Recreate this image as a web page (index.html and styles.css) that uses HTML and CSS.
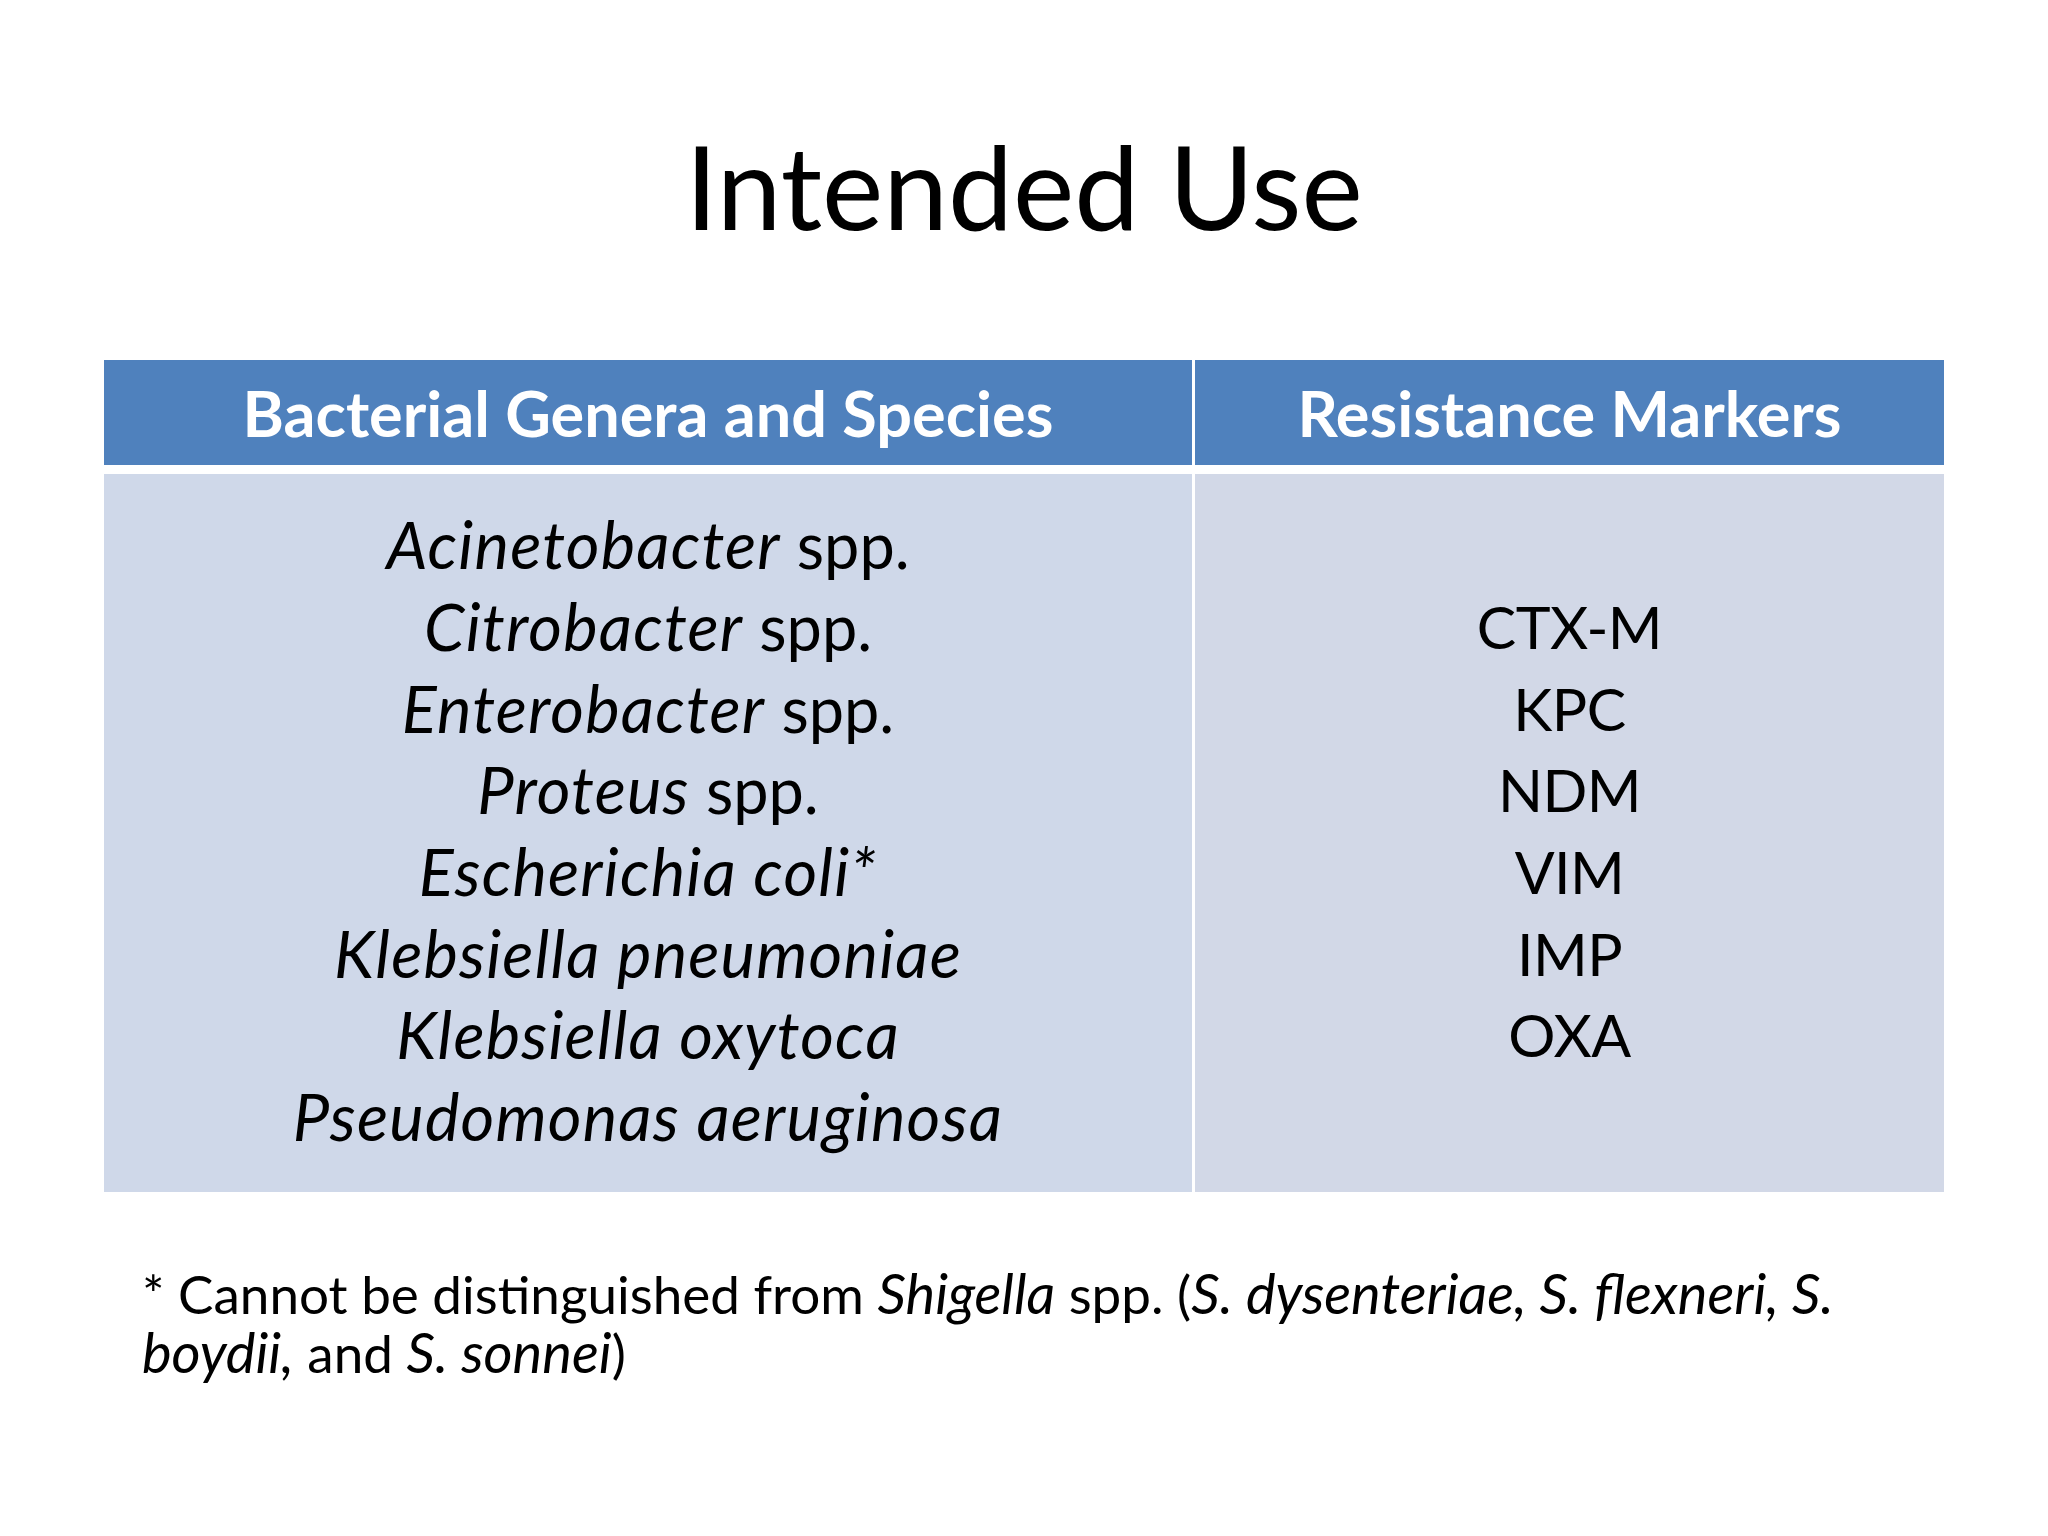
FILE: index.html
```html
<!DOCTYPE html>
<html lang="en">
<head>
<meta charset="utf-8">
<title>Intended Use</title>
<link rel="stylesheet" href="styles.css">
</head>
<body>
<div class="slide">
  <h1 class="title">Intended Use</h1>
  <div class="table">
    <div class="th">Bacterial Genera and Species</div>
    <div class="th">Resistance Markers</div>
    <div class="td td-left">
      <div><i>Acinetobacter</i> spp.</div>
      <div><i>Citrobacter</i> spp.</div>
      <div><i>Enterobacter</i> spp.</div>
      <div><i>Proteus</i> spp.</div>
      <div><i>Escherichia coli*</i></div>
      <div><i>Klebsiella pneumoniae</i></div>
      <div><i>Klebsiella oxytoca</i></div>
      <div><i>Pseudomonas aeruginosa</i></div>
    </div>
    <div class="td td-right">
      <div>CTX-M</div>
      <div>KPC</div>
      <div>NDM</div>
      <div>VIM</div>
      <div>IMP</div>
      <div>OXA</div>
    </div>
  </div>
  <p class="note">* Cannot be distinguished from <i>Shigella</i> spp. (<i>S. dysenteriae, S. flexneri, S.</i><br><i>boydii,</i> and <i>S. sonnei</i>)</p>
</div>
</body>
</html>
```

FILE: styles.css
```css
html, body {
  margin: 0;
  padding: 0;
  background: #ffffff;
}

.slide {
  width: 2048px;
  height: 1536px;
  box-sizing: border-box;
  padding-top: 116px;
  font-family: Lato, "Open Sans", sans-serif;
  color: #000000;
  display: flex;
  flex-direction: column;
  align-items: flex-start;
}

.title {
  align-self: center;
  margin: 0;
  font-size: 116px;
  line-height: 139px;
  font-weight: 400;
  text-align: center;
}

.table {
  margin: 105px 0 0 104px;
  display: grid;
  grid-template-columns: 1088px 749px;
  grid-template-rows: 105px 718px;
  column-gap: 3px;
  row-gap: 9px;
}

.th {
  background: #4f81bd;
  color: #ffffff;
  font-weight: 700;
  font-size: 63px;
  line-height: 105px;
  text-align: center;
  white-space: nowrap;
}

.td {
  display: flex;
  flex-direction: column;
  justify-content: center;
  align-items: center;
  font-size: 63px;
  line-height: 81.7px;
  padding-bottom: 4px;
  box-sizing: border-box;
  white-space: nowrap;
}

.td i {
  font-size: 65px;
  letter-spacing: 1.2px;
}

.td-left {
  background: #cfd8e9;
}

.td-right {
  background: #d2d8e7;
  font-size: 59px;
  letter-spacing: -0.5px;
}

.note {
  margin: 72px 0 0 142px;
  font-size: 53px;
  line-height: 58px;
  white-space: nowrap;
}

.note i {
  font-size: 56px;
}
```
